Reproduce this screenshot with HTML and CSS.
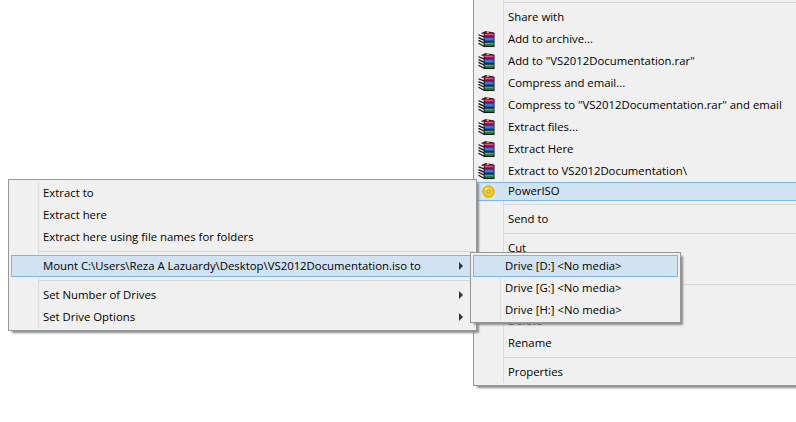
FILE: index.html
```html
<!DOCTYPE html>
<html>
<head>
<meta charset="utf-8">
<title>Context menu</title>
<link rel="stylesheet" href="styles.css">
</head>
<body>
<svg class="defs" width="0" height="0">
  <defs>
    <symbol id="rar" viewBox="0 0 18 18">
      <path d="M3 3l5-2.500 9 1.500v2l-9 1z" fill="#5c0c38"/>
      <path d="M0.500 5l6.500-2v15l-6.500-3z" fill="#eeeeee"/>
      <path d="M0.500 4.500l6.500 2.500M0.500 7.500l6.500 3M0.500 10.500l6.500 3M0.500 13.500l6.500 3.500" stroke="#111" stroke-width="1.300" fill="none"/>
      <rect x="6" y="2.500" width="11.500" height="5" fill="#111"/>
      <rect x="6" y="7.500" width="11.500" height="5" fill="#111"/>
      <rect x="6" y="12.500" width="11.500" height="5" fill="#111"/>
      <rect x="7" y="3" width="10" height="3.500" fill="#b80c70"/>
      <rect x="7" y="3.500" width="9" height="1" fill="#f060b0"/>
      <rect x="7" y="8" width="10" height="3.500" fill="#1458bc"/>
      <rect x="7" y="8.500" width="9" height="1" fill="#58a4f0"/>
      <rect x="7" y="13" width="10" height="3.500" fill="#0a7a3c"/>
      <rect x="7" y="13.500" width="9" height="1" fill="#48cc80"/>
      <path d="M9 1h2.500v1.500h-2.500z" fill="#e8d040"/>
    </symbol>
    <symbol id="disc" viewBox="0 0 14 14">
      <rect width="14" height="14" fill="#eeeee6"/>
      <circle cx="7" cy="7" r="6.800" fill="#d8a810"/>
      <circle cx="7" cy="7" r="5.500" fill="#f0cc28"/>
      <circle cx="5" cy="4.500" r="2" fill="#f8e868"/>
      <circle cx="7" cy="7" r="2.200" fill="#c8a020"/>
      <circle cx="7" cy="7" r="1" fill="#f4e8b0"/>
    </symbol>
  </defs>
</svg>

<div class="menu menu-back">
  <div class="sep"></div>
  <div class="row"><span class="ico"></span><span class="label">Share with</span></div>
  <div class="row"><span class="ico"><svg class="rar"><use href="#rar"/></svg></span><span class="label">Add to archive...</span></div>
  <div class="row"><span class="ico"><svg class="rar"><use href="#rar"/></svg></span><span class="label">Add to "VS2012Documentation.rar"</span></div>
  <div class="row"><span class="ico"><svg class="rar"><use href="#rar"/></svg></span><span class="label">Compress and email...</span></div>
  <div class="row"><span class="ico"><svg class="rar"><use href="#rar"/></svg></span><span class="label">Compress to "VS2012Documentation.rar" and email</span></div>
  <div class="row"><span class="ico"><svg class="rar"><use href="#rar"/></svg></span><span class="label">Extract files...</span></div>
  <div class="row"><span class="ico"><svg class="rar"><use href="#rar"/></svg></span><span class="label">Extract Here</span></div>
  <div class="row"><span class="ico"><svg class="rar"><use href="#rar"/></svg></span><span class="label">Extract to VS2012Documentation\</span></div>
  <div class="row hot hot-short"><span class="ico"><svg class="disc"><use href="#disc"/></svg></span><span class="label">PowerISO</span></div>
  <div class="sep"></div>
  <div class="row"><span class="ico"></span><span class="label">Send to</span></div>
  <div class="sep"></div>
  <div class="row"><span class="ico"></span><span class="label">Cut</span></div>
  <div class="row"><span class="ico"></span><span class="label">Copy</span></div>
  <div class="sep"></div>
  <div class="row"><span class="ico"></span><span class="label">Create shortcut</span></div>
  <div class="row"><span class="ico"></span><span class="label">Delete</span></div>
  <div class="row"><span class="ico"></span><span class="label">Rename</span></div>
  <div class="sep"></div>
  <div class="row"><span class="ico"></span><span class="label">Properties</span></div>
</div>

<div class="menu menu-iso">
  <div class="row"><span class="ico"></span><span class="label">Extract to</span></div>
  <div class="row"><span class="ico"></span><span class="label">Extract here</span></div>
  <div class="row"><span class="ico"></span><span class="label">Extract here using file names for folders</span></div>
  <div class="sep"></div>
  <div class="row hot"><span class="ico"></span><span class="label">Mount C:\Users\Reza A Lazuardy\Desktop\VS2012Documentation.iso to</span><span class="arrow"></span></div>
  <div class="sep"></div>
  <div class="row"><span class="ico"></span><span class="label">Set Number of Drives</span><span class="arrow"></span></div>
  <div class="row"><span class="ico"></span><span class="label">Set Drive Options</span><span class="arrow"></span></div>
</div>

<div class="menu menu-drives">
  <div class="row hot"><span class="ico"></span><span class="label">Drive [D:] &lt;No media&gt;</span></div>
  <div class="row"><span class="ico"></span><span class="label">Drive [G:] &lt;No media&gt;</span></div>
  <div class="row"><span class="ico"></span><span class="label">Drive [H:] &lt;No media&gt;</span></div>
</div>
</body>
</html>
```
FILE: styles.css
```css
html, body {
  margin: 0;
  padding: 0;
  width: 796px;
  height: 422px;
  overflow: hidden;
  background: #fff;
}
body {
  position: relative;
  font-family: "Open Sans", "Noto Sans", sans-serif;
  font-size: 11.35px;
  color: #000;
}
.defs { position: absolute; }
.menu {
  position: absolute;
  box-sizing: border-box;
  background: #f0f0f0;
  border: 1px solid #979797;
  padding: 2px;
  box-shadow: 3px 3px 2px -1px #8c8c8c;
}
.menu::before {
  content: "";
  position: absolute;
  top: 2px;
  bottom: 2px;
  left: 29px;
  width: 1px;
  background: #dcdcdc;
}
.menu-back { left: 473px; top: -4px; width: 340px; height: 390px; }
.menu-iso { left: 8px; top: 179px; width: 469px; height: 152px; }
.menu-drives { left: 470px; top: 252px; width: 211px; height: 71px; }
.row {
  position: relative;
  box-sizing: border-box;
  display: flex;
  align-items: center;
  height: 22px;
  border: 1px solid transparent;
}
.hot { background: #d1e2f2; border-color: #7eb4ea; }
.hot-short { height: 19px; }
.ico { width: 31px; flex: none; display: flex; align-items: center; box-sizing: border-box; }
.label { white-space: nowrap; flex: 1; padding-bottom: 2px; }
.rar { width: 17px; height: 18px; margin: -1px 0 0 1px; }
.disc { width: 13px; height: 13px; margin: -1px 0 0 5px; }
.arrow {
  flex: none;
  width: 0;
  height: 0;
  margin-right: 10px;
  border-left: 4px solid #333;
  border-top: 4px solid transparent;
  border-bottom: 4px solid transparent;
}
.sep { height: 1px; margin: 3px 0 3px 28px; background: #d7d7d7; }
```
